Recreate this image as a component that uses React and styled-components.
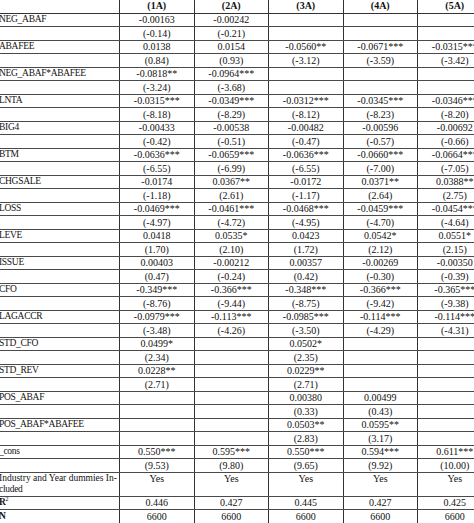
import React from 'react';
import styled, { createGlobalStyle } from 'styled-components';

const GlobalStyle = createGlobalStyle`
    html, body {
        margin: 0;
        padding: 0;
        background: #fff;
        overflow: hidden;
    }
    body {
        font-family: "Liberation Serif", "Times New Roman", serif;
        color: #111;
    }
`;

const models = ['(1A)', '(2A)', '(3A)', '(4A)', '(5A)'];

const rows = [
    ['NEG_ABAF', ['-0.00163', '-0.00242', '', '', ''], ['(-0.14)', '(-0.21)', '', '', '']],
    ['ABAFEE', ['0.0138', '0.0154', '-0.0560**', '-0.0671***', '-0.0315***'], ['(0.84)', '(0.93)', '(-3.12)', '(-3.59)', '(-3.42)']],
    ['NEG_ABAF*ABAFEE', ['-0.0818**', '-0.0964***', '', '', ''], ['(-3.24)', '(-3.68)', '', '', '']],
    ['LNTA', ['-0.0315***', '-0.0349***', '-0.0312***', '-0.0345***', '-0.0346***'], ['(-8.18)', '(-8.29)', '(-8.12)', '(-8.23)', '(-8.20)']],
    ['BIG4', ['-0.00433', '-0.00538', '-0.00482', '-0.00596', '-0.00692'], ['(-0.42)', '(-0.51)', '(-0.47)', '(-0.57)', '(-0.66)']],
    ['BTM', ['-0.0636***', '-0.0659***', '-0.0636***', '-0.0660***', '-0.0664***'], ['(-6.55)', '(-6.99)', '(-6.55)', '(-7.00)', '(-7.05)']],
    ['CHGSALE', ['-0.0174', '0.0367**', '-0.0172', '0.0371**', '0.0388**'], ['(-1.18)', '(2.61)', '(-1.17)', '(2.64)', '(2.75)']],
    ['LOSS', ['-0.0469***', '-0.0461***', '-0.0468***', '-0.0459***', '-0.0454***'], ['(-4.97)', '(-4.72)', '(-4.95)', '(-4.70)', '(-4.64)']],
    ['LEVE', ['0.0418', '0.0535*', '0.0423', '0.0542*', '0.0551*'], ['(1.70)', '(2.10)', '(1.72)', '(2.12)', '(2.15)']],
    ['ISSUE', ['0.00403', '-0.00212', '0.00357', '-0.00269', '-0.00350'], ['(0.47)', '(-0.24)', '(0.42)', '(-0.30)', '(-0.39)']],
    ['CFO', ['-0.349***', '-0.366***', '-0.348***', '-0.366***', '-0.365***'], ['(-8.76)', '(-9.44)', '(-8.75)', '(-9.42)', '(-9.38)']],
    ['LAGACCR', ['-0.0979***', '-0.113***', '-0.0985***', '-0.114***', '-0.114***'], ['(-3.48)', '(-4.26)', '(-3.50)', '(-4.29)', '(-4.31)']],
    ['STD_CFO', ['0.0499*', '', '0.0502*', '', ''], ['(2.34)', '', '(2.35)', '', '']],
    ['STD_REV', ['0.0228**', '', '0.0229**', '', ''], ['(2.71)', '', '(2.71)', '', '']],
    ['POS_ABAF', ['', '', '0.00380', '0.00499', ''], ['', '', '(0.33)', '(0.43)', '']],
    ['POS_ABAF*ABAFEE', ['', '', '0.0503**', '0.0595**', ''], ['', '', '(2.83)', '(3.17)', '']],
    ['_cons', ['0.550***', '0.595***', '0.550***', '0.594***', '0.611***'], ['(9.53)', '(9.80)', '(9.65)', '(9.92)', '(10.00)']],
];

const r2 = ['0.446', '0.427', '0.445', '0.427', '0.425'];

const App = () => (
    <>
        <GlobalStyle />
        <Table>
            <colgroup>
                <col style={{ width: 122 }} />
                {models.map((m) => <col key={m} style={{ width: 74.5 }} />)}
            </colgroup>
            <thead>
                <tr>
                    <HeadCell />
                    {models.map((m) => <HeadCell key={m}>{m}</HeadCell>)}
                </tr>
            </thead>
            <tbody>
                {rows.map(([name, coefs, stats]) => (
                    <React.Fragment key={name}>
                        <tr>
                            <Label>{name}</Label>
                            {coefs.map((c, i) => <Cell key={i}>{c}</Cell>)}
                        </tr>
                        <tr>
                            <Label />
                            {stats.map((s, i) => <Cell key={i}>{s}</Cell>)}
                        </tr>
                    </React.Fragment>
                ))}
                <tr>
                    <Label $tall>
                        <Justified>Industry and Year dummies In-</Justified>
                        <span>cluded</span>
                    </Label>
                    {models.map((m) => <Cell key={m} $top>Yes</Cell>)}
                </tr>
                <tr>
                    <Label><b>R</b><Sup>2</Sup></Label>
                    {r2.map((v, i) => <Cell key={i}>{v}</Cell>)}
                </tr>
                <tr>
                    <Label><b>N</b></Label>
                    {models.map((m) => <Cell key={m}>6600</Cell>)}
                </tr>
            </tbody>
        </Table>
    </>
);

export default App;

const Table = styled.table`
    border-collapse: collapse;
    table-layout: fixed;
    width: 494.5px;
    margin: -1px 0 0 -3px;
    font-size: 10px;
    line-height: 11px;
`;

const HeadCell = styled.th`
    height: 13.5px;
    padding: 0;
    font-weight: bold;
    text-align: center;
    border: 1px solid #333;
    border-top: none;
`;

const Label = styled.td`
    height: ${(p) => (p.$tall ? '23px' : '12.5px')};
    padding: 0 3px 0 1.5px;
    font-size: 9.5px;
    letter-spacing: -0.3px;
    text-align: left;
    vertical-align: middle;
    white-space: nowrap;
    border-top: 1px solid #4a4a4a;
    border-bottom: 1px solid #4a4a4a;
    border-right: 1px solid #333;
`;

const Cell = styled.td`
    padding: 0;
    text-align: center;
    vertical-align: ${(p) => (p.$top ? 'top' : 'middle')};
    white-space: nowrap;
    border: 1px solid #4a4a4a;
    border-left-color: #333;
    border-right-color: #333;
`;

const Justified = styled.span`
    display: block;
    text-align: justify;
    text-align-last: justify;
    letter-spacing: 0;
`;

const Sup = styled.sup`
    font-size: 6px;
    vertical-align: 4px;
    line-height: 0;
`;
